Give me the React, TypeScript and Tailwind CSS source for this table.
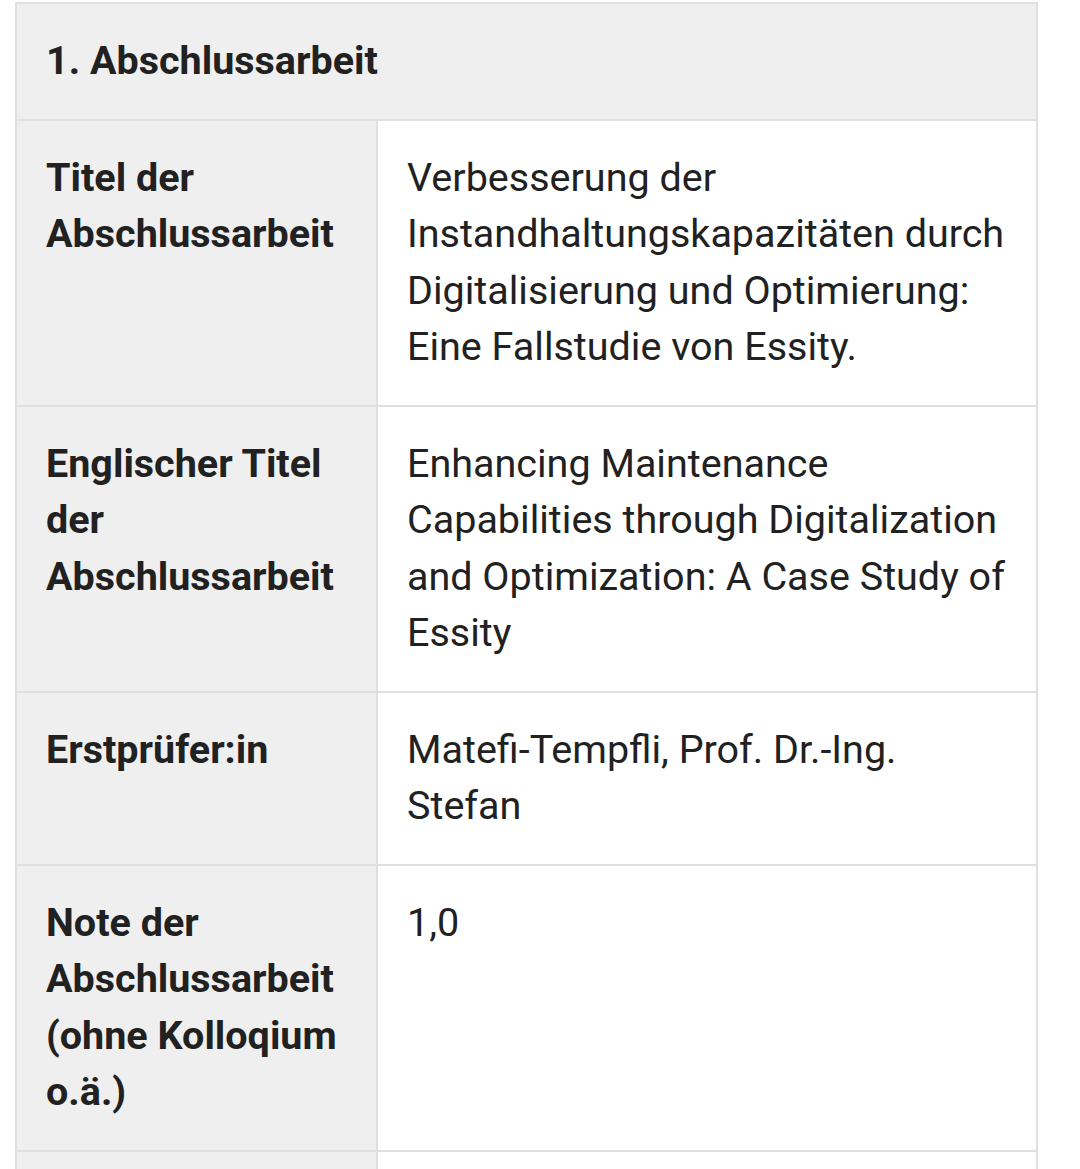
import React from 'react';

type Row = { label: string[]; value: string };

const rows: Row[] = [
  {
    label: ['Titel der', 'Abschlussarbeit'],
    value:
      'Verbesserung der Instandhaltungskapazitäten durch Digitalisierung und Optimierung: Eine Fallstudie von Essity.',
  },
  {
    label: ['Englischer Titel', 'der', 'Abschlussarbeit'],
    value:
      'Enhancing Maintenance Capabilities through Digitalization and Optimization: A Case Study of Essity',
  },
  { label: ['Erstprüfer:in'], value: 'Matefi-Tempfli, Prof. Dr.-Ing. Stefan' },
  {
    label: ['Note der', 'Abschlussarbeit', '(ohne Kolloqium', 'o.ä.)'],
    value: '1,0',
  },
];

export default function App() {
  return (
    <div className="bg-white min-h-screen pt-[2px] pl-[15px] text-[#212121] font-['Roboto',sans-serif]">
      <table className="w-[1023px] border-collapse border-2 border-[#e0e0e0] text-[39.5px] leading-[56.5px]">
        <thead>
          <tr className="bg-[#efefef]">
            <th colSpan={2} className="text-left font-bold px-[29px] py-[29px] border-2 border-[#e0e0e0]">
              1. Abschlussarbeit
            </th>
          </tr>
        </thead>
        <tbody>
          {rows.map((r, i) => (
            <tr key={i}>
              <th className="w-[361px] bg-[#efefef] text-left align-top font-bold px-[29px] py-[29px] border-2 border-[#e0e0e0]">
                {r.label.map((l, j) => (
                  <div key={j}>{l}</div>
                ))}
              </th>
              <td className="bg-white align-top px-[29px] py-[29px] border-2 border-[#e0e0e0]">
                {r.value}
              </td>
            </tr>
          ))}
          {/* next row, cut off by the viewport */}
          <tr className="h-[116px]">
            <th className="bg-[#efefef] border-2 border-[#e0e0e0]"></th>
            <td className="bg-white border-2 border-[#e0e0e0]"></td>
          </tr>
        </tbody>
      </table>
    </div>
  );
}
